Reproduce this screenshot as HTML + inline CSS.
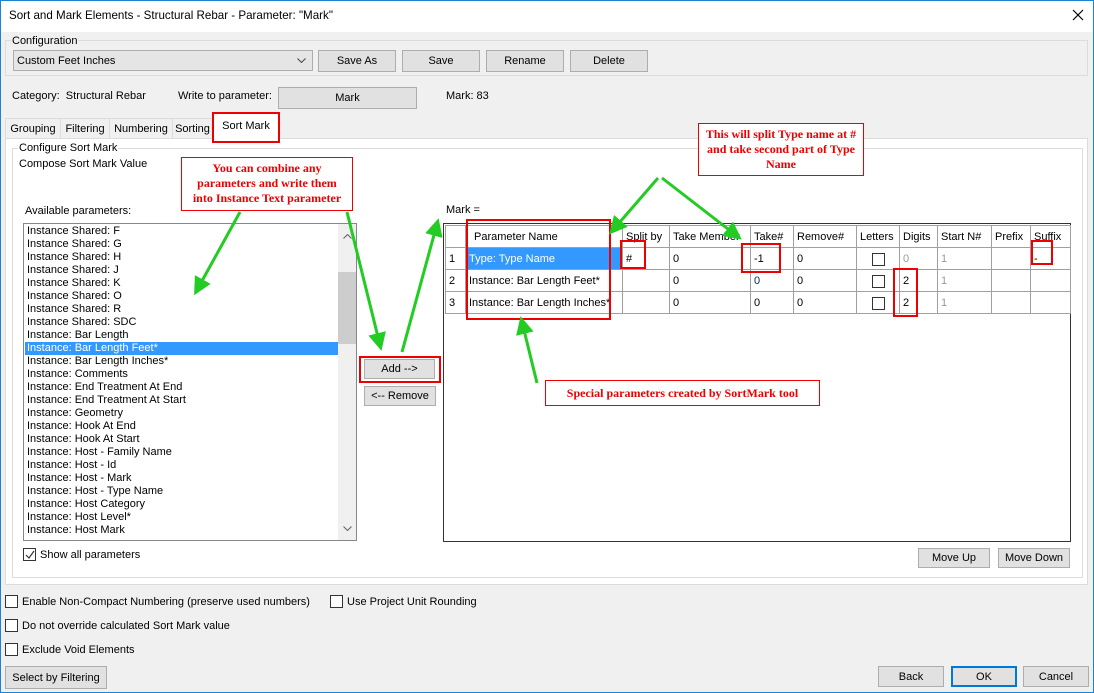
<!DOCTYPE html>
<html><head><meta charset="utf-8"><style>
*{box-sizing:border-box;margin:0;padding:0}
body{width:1094px;height:693px;overflow:hidden;background:#f0f0f0;font-family:"Liberation Sans",sans-serif;font-size:11px;color:#000;position:relative}
.a{position:absolute;white-space:nowrap}
.btn{position:absolute;background:#e1e1e1;border:1px solid #adadad;text-align:center;line-height:20px}
.cb{position:absolute;width:13px;height:13px;border:1px solid #333;background:#fff}
.li{position:absolute;left:27px;height:13px;line-height:13px}
table{border-collapse:collapse;position:absolute;left:445px;top:225px;background:#fff;table-layout:fixed;width:625px}
td{border:1px solid #a0a0a0;height:22px;padding:0 3px;font-size:11px;white-space:nowrap;overflow:hidden}
.r{border:2px solid #e00;position:absolute}
.n{font-family:"Liberation Serif",serif;font-weight:bold;color:#e00;font-size:12px;text-align:center;line-height:15px;position:absolute;background:#fff;border:1px solid #e00;white-space:normal}
.tab{position:absolute;top:118px;height:21px;border:1px solid #dcdcdc;padding:4px 0 0 0;text-align:center}
</style></head><body>
<div class="a" style="left:0;top:0;width:1094px;height:693px;border:1px solid #1883d7"></div>
<div class="a" style="left:1px;top:1px;width:1092px;height:31px;background:#fff"></div>
<div class="a" style="left:9px;top:9px;font-size:11.6px">Sort and Mark Elements - Structural Rebar - Parameter: "Mark"</div>
<svg class="a" style="left:1072px;top:9px" width="12" height="12"><path d="M1,1 L11,11 M11,1 L1,11" stroke="#000" stroke-width="1.2"/></svg>

<div class="a" style="left:5px;top:40px;width:1083px;height:36px;border:1px solid #dcdcdc"></div>
<div class="a" style="left:11px;top:35px;background:#f0f0f0;padding:0 1px">Configuration</div>
<div class="a" style="left:13px;top:50px;width:300px;height:21px;border:1px solid #adadad;background:#e5e5e5;padding:4px 3px">Custom Feet Inches<svg style="position:absolute;right:6px;top:7px" width="9" height="5"><path d="M0.5,0.5 L4.5,4.5 L8.5,0.5" stroke="#444" fill="none"/></svg></div>
<div class="btn" style="left:318px;top:50px;width:78px;height:22px">Save As</div>
<div class="btn" style="left:402px;top:50px;width:78px;height:22px">Save</div>
<div class="btn" style="left:486px;top:50px;width:78px;height:22px">Rename</div>
<div class="btn" style="left:570px;top:50px;width:78px;height:22px">Delete</div>

<div class="a" style="left:12px;top:90px">Category:&nbsp; Structural Rebar</div>
<div class="a" style="left:178px;top:90px">Write to parameter:</div>
<div class="btn" style="left:278px;top:87px;width:139px;height:22px;line-height:21px">Mark</div>
<div class="a" style="left:446px;top:90px">Mark: 83</div>

<div class="a" style="left:5px;top:138px;width:1083px;height:447px;background:#fff;border:1px solid #dcdcdc"></div>
<div class="tab" style="left:5px;width:56px">Grouping</div>
<div class="tab" style="left:60px;width:50px">Filtering</div>
<div class="tab" style="left:109px;width:64px">Numbering</div>
<div class="tab" style="left:172px;width:41px">Sorting</div>
<div class="a" style="left:213px;top:114px;width:66px;height:26px;background:#fff;padding-top:6px;text-align:center">Sort Mark</div>
<div class="r" style="left:212px;top:112px;width:68px;height:31px"></div>

<div class="a" style="left:12px;top:148px;width:1071px;height:430px;border:1px solid #dcdcdc"></div>
<div class="a" style="left:18px;top:142px;background:#fff;padding:0 1px">Configure Sort Mark</div>
<div class="a" style="left:19px;top:158px">Compose Sort Mark Value</div>
<div class="a" style="left:25px;top:205px">Available parameters:</div>

<div class="a" style="left:23px;top:223px;width:334px;height:318px;border:1px solid #828790;background:#fff;overflow:hidden">
<div class="a" style="left:314px;top:0;width:18px;height:316px;background:#f0f0f0"></div>
<div class="a" style="left:314px;top:48px;width:18px;height:72px;background:#cdcdcd"></div>
<svg class="a" style="left:319px;top:10px" width="9" height="5"><path d="M0.5,4.5 L4.5,0.5 L8.5,4.5" stroke="#606060" fill="none"/></svg>
<svg class="a" style="left:319px;top:302px" width="9" height="5"><path d="M0.5,0.5 L4.5,4.5 L8.5,0.5" stroke="#606060" fill="none"/></svg>
<div class="a" style="left:1px;top:118px;width:313px;height:13px;background:#3399ff"></div>
</div>
<div class="li" style="top:225px">Instance Shared: F</div>
<div class="li" style="top:238px">Instance Shared: G</div>
<div class="li" style="top:251px">Instance Shared: H</div>
<div class="li" style="top:264px">Instance Shared: J</div>
<div class="li" style="top:277px">Instance Shared: K</div>
<div class="li" style="top:290px">Instance Shared: O</div>
<div class="li" style="top:303px">Instance Shared: R</div>
<div class="li" style="top:316px">Instance Shared: SDC</div>
<div class="li" style="top:329px">Instance: Bar Length</div>
<div class="li" style="top:342px;color:#fff">Instance: Bar Length Feet*</div>
<div class="li" style="top:355px">Instance: Bar Length Inches*</div>
<div class="li" style="top:368px">Instance: Comments</div>
<div class="li" style="top:381px">Instance: End Treatment At End</div>
<div class="li" style="top:394px">Instance: End Treatment At Start</div>
<div class="li" style="top:407px">Instance: Geometry</div>
<div class="li" style="top:420px">Instance: Hook At End</div>
<div class="li" style="top:433px">Instance: Hook At Start</div>
<div class="li" style="top:446px">Instance: Host - Family Name</div>
<div class="li" style="top:459px">Instance: Host - Id</div>
<div class="li" style="top:472px">Instance: Host - Mark</div>
<div class="li" style="top:485px">Instance: Host - Type Name</div>
<div class="li" style="top:498px">Instance: Host Category</div>
<div class="li" style="top:511px">Instance: Host Level*</div>
<div class="li" style="top:524px">Instance: Host Mark</div>

<div class="cb" style="left:23px;top:548px"><svg style="position:absolute;left:1px;top:1px" width="10" height="10"><path d="M1,5 L4,8 L9,1" stroke="#333" fill="none" stroke-width="1.2"/></svg></div>
<div class="a" style="left:40px;top:549px">Show all parameters</div>

<div class="btn" style="left:364px;top:359px;width:71px;height:20px;line-height:19px">Add --&gt;</div>
<div class="r" style="left:359px;top:356px;width:82px;height:27px"></div>
<div class="btn" style="left:364px;top:386px;width:72px;height:20px;line-height:19px">&lt;-- Remove</div>

<div class="a" style="left:446px;top:204px">Mark =</div>
<div class="a" style="left:443px;top:223px;width:628px;height:319px;border:1px solid #333;background:#fff"></div>
<table>
<colgroup><col style="width:20px"><col style="width:157px"><col style="width:47px"><col style="width:81px"><col style="width:43px"><col style="width:63px"><col style="width:43px"><col style="width:38px"><col style="width:54px"><col style="width:39px"><col style="width:40px"></colgroup>
<tr><td></td><td style="padding-left:8px">Parameter Name</td><td>Split by</td><td>Take Member</td><td>Take#</td><td>Remove#</td><td>Letters</td><td>Digits</td><td>Start N#</td><td>Prefix</td><td>Suffix</td></tr>
<tr><td>1</td><td style="background:#3399ff;color:#fff">Type: Type Name</td><td>#</td><td>0</td><td>-1</td><td>0</td><td style="text-align:center"><span class="cb" style="position:relative;display:inline-block;top:2px"></span></td><td style="color:#999">0</td><td style="color:#999">1</td><td></td><td>-</td></tr>
<tr><td>2</td><td>Instance: Bar Length Feet*</td><td></td><td>0</td><td style="color:#036">0</td><td>0</td><td style="text-align:center"><span class="cb" style="position:relative;display:inline-block;top:2px"></span></td><td>2</td><td style="color:#999">1</td><td></td><td></td></tr>
<tr><td>3</td><td>Instance: Bar Length Inches*</td><td></td><td>0</td><td>0</td><td>0</td><td style="text-align:center"><span class="cb" style="position:relative;display:inline-block;top:2px"></span></td><td>2</td><td style="color:#999">1</td><td></td><td></td></tr>
</table>

<div class="btn" style="left:918px;top:548px;width:72px;height:20px;line-height:19px">Move Up</div>
<div class="btn" style="left:998px;top:548px;width:72px;height:20px;line-height:19px">Move Down</div>

<div class="cb" style="left:5px;top:595px"></div><div class="a" style="left:22px;top:596px">Enable Non-Compact Numbering (preserve used numbers)</div>
<div class="cb" style="left:330px;top:595px"></div><div class="a" style="left:347px;top:596px">Use Project Unit Rounding</div>
<div class="cb" style="left:5px;top:619px"></div><div class="a" style="left:22px;top:620px">Do not override calculated Sort Mark value</div>
<div class="cb" style="left:5px;top:643px"></div><div class="a" style="left:22px;top:644px">Exclude Void Elements</div>
<div class="btn" style="left:5px;top:666px;width:102px;height:23px;line-height:22px">Select by Filtering</div>
<div class="btn" style="left:878px;top:666px;width:66px;height:21px">Back</div>
<div class="btn" style="left:951px;top:666px;width:66px;height:21px;border:2px solid #0078d7;line-height:18px">OK</div>
<div class="btn" style="left:1023px;top:666px;width:66px;height:21px">Cancel</div>

<div class="n" style="left:181px;top:157px;width:172px;height:54px;padding:3px 6px 0">You can combine any parameters and write them into Instance Text parameter</div>
<div class="n" style="left:698px;top:123px;width:166px;height:53px;padding:3px 6px 0">This will split Type name at # and take second part of Type Name</div>
<div class="n" style="left:545px;top:380px;width:275px;height:26px;line-height:24px">Special parameters created by SortMark tool</div>
<div class="r" style="left:466px;top:219px;width:145px;height:101px"></div>
<div class="r" style="left:620px;top:240px;width:26px;height:29px"></div>
<div class="r" style="left:741px;top:243px;width:40px;height:30px"></div>
<div class="r" style="left:893px;top:268px;width:25px;height:49px"></div>
<div class="r" style="left:1031px;top:240px;width:22px;height:25px"></div>

<svg class="a" style="left:0;top:0" width="1094" height="693">
<defs><marker id="m" markerWidth="6" markerHeight="6" refX="4" refY="3" orient="auto"><path d="M0,0 L6,3 L0,6 z" fill="#22cc22"/></marker></defs>
<g stroke="#22cc22" stroke-width="3" fill="none" marker-end="url(#m)">
<line x1="240" y1="212" x2="197" y2="290"/>
<line x1="347" y1="212" x2="380" y2="345"/>
<line x1="402" y1="352" x2="437" y2="224"/>
<line x1="658" y1="178" x2="613" y2="230"/>
<line x1="662" y1="178" x2="737" y2="236"/>
<line x1="537" y1="383" x2="522" y2="322"/>
</g></svg>
</body></html>
